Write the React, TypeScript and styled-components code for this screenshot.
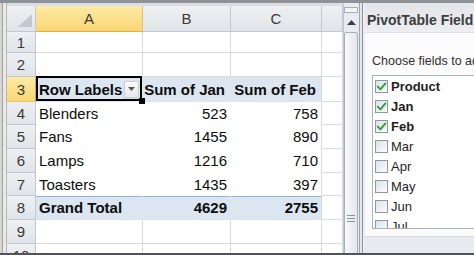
import React from 'react';
import styled, { createGlobalStyle, css } from 'styled-components';

const GRID = '#d9dcdf';
const BLUE = '#dce6f1';
const HEAD_BORDER = '#c2c8cf';

const Global = createGlobalStyle`
  html, body { margin: 0; padding: 0; background: #fff; }
  body { width: 474px; height: 255px; overflow: hidden; font-family: "Liberation Sans", Arial, sans-serif; }
`;

const Window = styled.div`
  width: 474px;
  height: 255px;
  overflow: hidden;
  display: flex;
  flex-direction: column;
  background: #fff;
`;

const TopBar = styled.div`
  flex: none;
  height: 3px;
  background: #8f9297;
`;

const BottomBar = styled.div`
  flex: none;
  height: 2px;
  background: #505357;
`;

const Body = styled.div`
  flex: 1;
  min-height: 0;
  display: flex;
  overflow: hidden;
`;

const LeftStrip = styled.div`
  flex: none;
  width: 7px;
  background: linear-gradient(to right, #d6d6d6 0 2px, #a0a2a5 2px 3px, #ece9e2 3px 6px, #b3b7bc 6px 7px);
`;

const Sheet = styled.div`
  flex: none;
  width: 336px;
  display: flex;
  flex-direction: column;
  overflow: hidden;
`;

const SheetGap = styled.div`
  flex: none;
  height: 3px;
  background: #dadee3;
`;

const Grid = styled.div`
  display: grid;
  grid-template-columns: 29px 107px 88px 91px 21px;
  grid-template-rows: 26px 21px 24px 25px 23px 24px 24px 23px 24px 24px 24px;
`;

const HeadCell = styled.div<{ $selected?: boolean; $row?: boolean }>`
  box-sizing: border-box;
  display: flex;
  align-items: center;
  justify-content: center;
  font-size: 15px;
  color: #3a3a3a;
  border-right: 1px solid ${HEAD_BORDER};
  border-bottom: 1px solid ${HEAD_BORDER};
  background: linear-gradient(#eef0f3, #e0e4e8);
  ${(p) =>
    p.$selected &&
    css`
      background: linear-gradient(#fdeaa6, #f9d674);
      border-bottom-color: ${p.$row ? '#e9c170' : '#e2ad4a'};
      border-right-color: ${p.$row ? '#c9a865' : '#d9bf87'};
    `}
`;

const Corner = styled(HeadCell)`
  align-items: flex-end;
  justify-content: flex-end;
  padding: 0 3px 4px 0;
`;

type Band = 'plain' | 'head' | 'body' | 'total';

const Cell = styled.div<{ $band: Band; $right?: boolean; $bold?: boolean; $edge?: boolean }>`
  position: relative;
  box-sizing: border-box;
  display: flex;
  align-items: center;
  overflow: visible;
  white-space: nowrap;
  font-size: 15px;
  color: #0d0d0d;
  font-weight: ${(p) => (p.$bold ? 700 : 400)};
  justify-content: ${(p) => (p.$right ? 'flex-end' : 'flex-start')};
  padding: ${(p) => (p.$right ? `0 ${p.$band === 'head' ? 5 : 3}px 0 0` : '0 3px 0 3px')};
  background: ${(p) => (p.$band === 'head' || p.$band === 'total' ? BLUE : '#fff')};
  border-right: 1px solid
    ${(p) => (p.$band === 'plain' || p.$edge ? GRID : p.$band === 'body' ? '#fff' : BLUE)};
  border-bottom: 1px solid ${(p) => (p.$band === 'plain' ? GRID : p.$band === 'body' ? '#fff' : BLUE)};
  ${(p) =>
    p.$band === 'total' &&
    css`
      box-shadow: inset 0 1px 0 #95b3d7;
    `}
`;

const ActiveFrame = styled.div`
  position: absolute;
  top: -1px;
  left: 0;
  right: 0;
  bottom: 0;
  border: 2px solid #000;
  pointer-events: none;
`;

const FillHandle = styled.div`
  position: absolute;
  right: -3px;
  bottom: -3px;
  width: 6px;
  height: 6px;
  background: #000;
  z-index: 2;
`;

const DropButton = styled.div`
  margin-left: auto;
  width: 15px;
  height: 17px;
  box-sizing: border-box;
  display: flex;
  align-items: center;
  justify-content: center;
  background: linear-gradient(#fbfbfb, #e6e8eb);
  border: 1px solid #c9cdd2;
`;

const ScrollBar = styled.div`
  flex: none;
  width: 16px;
  box-sizing: border-box;
  border-left: 1px solid #c3c8cf;
  background: #e8ebef;
  display: flex;
  flex-direction: column;
  overflow: hidden;
`;

const SplitBox = styled.div`
  flex: none;
  margin: 4px 1px 0 0;
  height: 6px;
  box-sizing: border-box;
  border: 1px solid #a6aeb8;
  background: #f3f5f7;
`;

const ArrowButton = styled.div`
  flex: none;
  height: 19px;
  display: flex;
  align-items: center;
  justify-content: center;
  padding-right: 1px;
`;

const Thumb = styled.div`
  flex: none;
  height: 372px;
  margin-right: 1px;
  box-sizing: border-box;
  border: 1px solid #a7afba;
  border-radius: 2px;
  background: linear-gradient(to right, #f7f8fa, #e3e7ec);
  display: flex;
  align-items: center;
  justify-content: center;
`;

const Splitter = styled.div`
  flex: none;
  width: 6px;
  background: linear-gradient(to right, #9ea4ab 0 1px, #e3e6ea 1px 3px, #8d939a 3px 4px, #eceef1 4px 6px);
`;

const Panel = styled.div`
  flex: 1;
  min-width: 0;
  display: flex;
  flex-direction: column;
  overflow: hidden;
  background: #fff;
`;

const PanelTitle = styled.div`
  flex: none;
  height: 30px;
  box-sizing: border-box;
  padding: 4px 0 0 2px;
  display: flex;
  align-items: center;
  white-space: nowrap;
  font-size: 14px;
  font-weight: 700;
  color: #3b3d40;
  background: linear-gradient(#e2e5e9, #eceef1);
  border-bottom: 1px solid #dde0e4;
`;

const PanelContent = styled.div`
  flex: none;
  height: 203px;
  box-sizing: border-box;
  padding: 20px 0 0 7px;
  display: flex;
  flex-direction: column;
  background: #fbfbfc;
`;

const Prompt = styled.div`
  height: 16px;
  line-height: 16px;
  font-size: 12.5px;
  color: #2f2f2f;
  white-space: nowrap;
`;

const FieldList = styled.div`
  margin-top: 6px;
  height: 154px;
  box-sizing: border-box;
  border: 1px solid #aab2bc;
  border-right: none;
  background: #fff;
  overflow: hidden;
  padding-left: 2px;
`;

const FieldRow = styled.div<{ $checked?: boolean }>`
  height: 20px;
  display: flex;
  align-items: center;
  gap: 3px;
  white-space: nowrap;
  font-size: 13px;
  color: #1e1e1e;
  font-weight: ${(p) => (p.$checked ? 700 : 400)};
`;

const Box = styled.div`
  flex: none;
  width: 13px;
  height: 13px;
  box-sizing: border-box;
  border: 1px solid #8d98a7;
  background: linear-gradient(135deg, #dde2e8, #fbfcfd);
  display: flex;
  align-items: center;
  justify-content: center;
`;

const PanelFooter = styled.div`
  flex: 1;
  background: #e7eaee;
  border-top: 1px solid #d3d7dc;
`;

const CornerTriangle = () => (
  <svg width="14" height="13" viewBox="0 0 14 13">
    <polygon points="14,0 14,13 0,13" fill="#c4c8ce" />
  </svg>
);

const DownTriangle = () => (
  <svg width="7" height="4" viewBox="0 0 7 4">
    <polygon points="0,0 7,0 3.5,4" fill="#55595e" />
  </svg>
);

const UpTriangle = () => (
  <svg width="9" height="5" viewBox="0 0 9 5">
    <polygon points="4.5,0 9,5 0,5" fill="#3d4045" />
  </svg>
);

const Grip = () => (
  <svg width="8" height="7" viewBox="0 0 8 7">
    <rect x="0" y="0" width="8" height="1" fill="#8a929c" />
    <rect x="0" y="3" width="8" height="1" fill="#8a929c" />
    <rect x="0" y="6" width="8" height="1" fill="#8a929c" />
  </svg>
);

const Check = () => (
  <svg width="11" height="11" viewBox="0 0 11 11">
    <path d="M1.8 5.6 L4.4 8.3 L9.4 2.4" fill="none" stroke="#2f9d36" strokeWidth="1.9" strokeLinecap="round" strokeLinejoin="round" />
  </svg>
);

type Row = { n: number; band: Band; cells: [string, string, string] };

const rows: Row[] = [
  { n: 1, band: 'plain', cells: ['', '', ''] },
  { n: 2, band: 'plain', cells: ['', '', ''] },
  { n: 3, band: 'head', cells: ['Row Labels', 'Sum of Jan', 'Sum of Feb'] },
  { n: 4, band: 'body', cells: ['Blenders', '523', '758'] },
  { n: 5, band: 'body', cells: ['Fans', '1455', '890'] },
  { n: 6, band: 'body', cells: ['Lamps', '1216', '710'] },
  { n: 7, band: 'body', cells: ['Toasters', '1435', '397'] },
  { n: 8, band: 'total', cells: ['Grand Total', '4629', '2755'] },
  { n: 9, band: 'plain', cells: ['', '', ''] },
  { n: 10, band: 'plain', cells: ['', '', ''] },
  { n: 11, band: 'plain', cells: ['', '', ''] },
];

const fields = [
  { name: 'Product', checked: true },
  { name: 'Jan', checked: true },
  { name: 'Feb', checked: true },
  { name: 'Mar', checked: false },
  { name: 'Apr', checked: false },
  { name: 'May', checked: false },
  { name: 'Jun', checked: false },
  { name: 'Jul', checked: false },
];

export default function App() {
  return (
    <Window>
      <Global />
      <TopBar />
      <Body>
        <LeftStrip />
        <Sheet>
          <SheetGap />
          <Grid>
            <Corner>
              <CornerTriangle />
            </Corner>
            <HeadCell $selected>A</HeadCell>
            <HeadCell>B</HeadCell>
            <HeadCell>C</HeadCell>
            <HeadCell />
            {rows.map((r) => {
              const bold = r.band === 'head' || r.band === 'total';
              return (
                <React.Fragment key={r.n}>
                  <HeadCell $selected={r.n === 3} $row>
                    {r.n}
                  </HeadCell>
                  <Cell $band={r.band} $bold={bold}>
                    {r.cells[0]}
                    {r.n === 3 && (
                      <>
                        <DropButton>
                          <DownTriangle />
                        </DropButton>
                        <ActiveFrame />
                        <FillHandle />
                      </>
                    )}
                  </Cell>
                  <Cell $band={r.band} $bold={bold} $right>
                    {r.cells[1]}
                  </Cell>
                  <Cell $band={r.band} $bold={bold} $right $edge>
                    {r.cells[2]}
                  </Cell>
                  <Cell $band="plain" />
                </React.Fragment>
              );
            })}
          </Grid>
        </Sheet>
        <ScrollBar>
          <SplitBox />
          <ArrowButton>
            <UpTriangle />
          </ArrowButton>
          <Thumb>
            <Grip />
          </Thumb>
        </ScrollBar>
        <Splitter />
        <Panel>
          <PanelTitle>PivotTable Field List</PanelTitle>
          <PanelContent>
            <Prompt>Choose fields to add to report:</Prompt>
            <FieldList>
              {fields.map((f) => (
                <FieldRow key={f.name} $checked={f.checked}>
                  <Box>{f.checked && <Check />}</Box>
                  {f.name}
                </FieldRow>
              ))}
            </FieldList>
          </PanelContent>
          <PanelFooter />
        </Panel>
      </Body>
      <BottomBar />
    </Window>
  );
}
